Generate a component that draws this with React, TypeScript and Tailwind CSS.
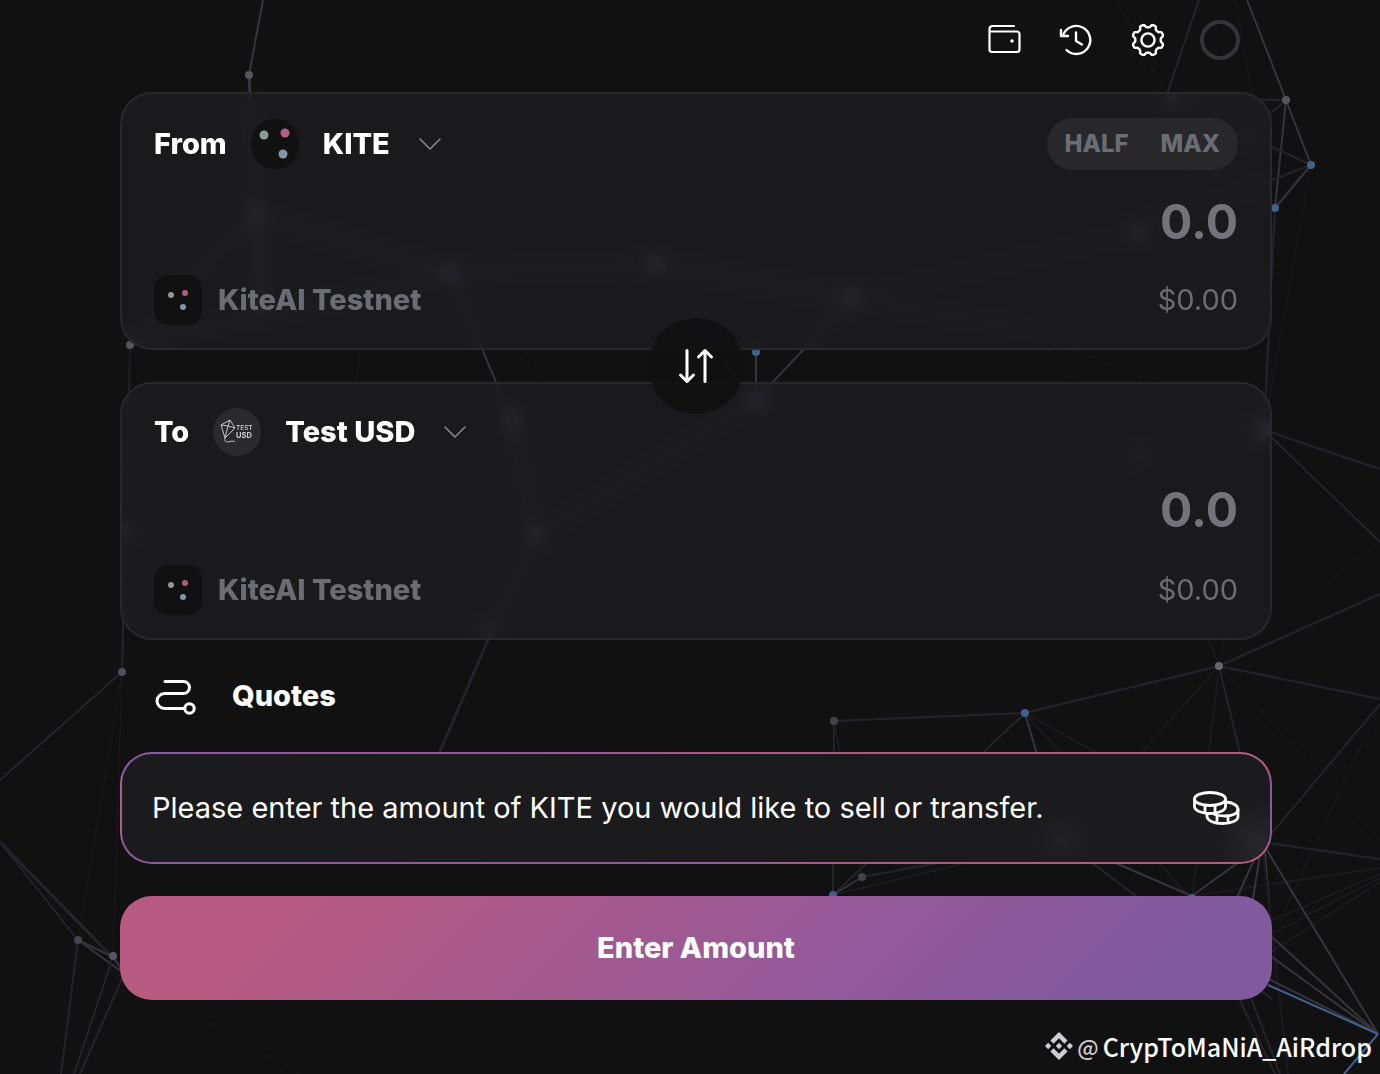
import type { ReactNode } from "react";
import { SiBinance } from "react-icons/si";

type Line = [number, number, number, number, string?, number?];

const faint = "#1b1a1e";
const dim = "#242329";
const mid = "#36343b";
const glow = "#3c394e";
const blue = "#42608e";

// Constellation lines: x1, y1, x2, y2, colour, width
const lines: Line[] = [
  [263, 0, 249, 75, mid, 2],
  [249, 75, 256, 214, mid, 3],
  [256, 214, 262, 315, mid, 5],
  [256, 214, 130, 345, dim, 4],
  [256, 214, 450, 273, mid, 3],
  [450, 273, 654, 264, mid, 2],
  [654, 264, 852, 298, mid, 3],
  [654, 264, 756, 404, dim, 2],
  [450, 273, 512, 420, mid, 2],
  [130, 345, 450, 273, dim, 4],
  [130, 345, 122, 672, dim, 2],
  [122, 528, 130, 345, faint],
  [340, 520, 360, 350, faint],
  [540, 380, 450, 273, faint],
  [852, 298, 756, 400, mid, 2],
  [852, 298, 1138, 232, dim, 2],
  [756, 352, 756, 400, mid, 2],
  [512, 420, 536, 536, mid, 4],
  [536, 536, 756, 400, dim, 3],
  [536, 536, 488, 640, dim, 4],
  [488, 640, 432, 770, dim, 3],
  [1030, 330, 1264, 430, faint],
  [1030, 330, 852, 298, dim, 3],
  [1030, 330, 1138, 455, faint],
  [1199, 0, 1167, 94, dim, 2],
  [1247, 0, 1286, 100, mid, 2],
  [1235, 0, 1252, 94, faint],
  [1116, 0, 1167, 94, faint],
  [1167, 98, 1286, 100, dim, 2],
  [1138, 232, 1286, 100, dim, 2],
  [1286, 100, 1311, 165, mid, 2],
  [1286, 100, 1275, 208, mid, 2],
  [1311, 165, 1275, 208, mid, 2],
  [1311, 165, 1167, 98, dim, 2],
  [1311, 165, 1138, 232, dim, 2],
  [1311, 165, 1264, 430, faint],
  [1275, 208, 1264, 430, dim, 2],
  [1264, 430, 1380, 469, dim, 2],
  [1264, 430, 1380, 542, dim, 2],
  [1264, 430, 1219, 666, faint],
  [1138, 455, 1219, 666, dim],
  [1219, 666, 1380, 594, dim, 2],
  [1219, 666, 1380, 699, dim, 2],
  [1219, 666, 1025, 713, dim, 2],
  [1219, 666, 1062, 840, dim],
  [1219, 666, 1192, 900, faint, 2],
  [1219, 666, 1262, 845, dim, 2],
  [1219, 666, 1380, 840, faint],
  [1219, 666, 1380, 542, faint],
  [1025, 713, 834, 721, dim, 2],
  [1025, 713, 1062, 840, mid, 2],
  [1025, 713, 833, 895, dim, 2],
  [1025, 713, 1192, 900, faint, 2],
  [1025, 713, 1262, 845, faint, 2],
  [1062, 840, 862, 877, dim, 2],
  [1062, 840, 1192, 896, mid, 2],
  [1062, 840, 1273, 1000, dim, 2],
  [834, 721, 833, 895, dim, 2],
  [834, 721, 862, 877, dim],
  [834, 721, 1062, 840, faint],
  [862, 877, 833, 895, mid, 2],
  [833, 895, 1062, 840, dim],
  [1192, 896, 1262, 845, mid, 2],
  [1192, 896, 1380, 868, faint, 2],
  [1380, 704, 1262, 845, dim, 2],
  [1380, 704, 1276, 930, faint],
  [1262, 842, 1380, 859, dim, 2],
  [1262, 842, 1378, 1034, mid, 2],
  [1262, 842, 1200, 980, mid, 2],
  [1262, 842, 1240, 980, mid, 2],
  [1264, 842, 1272, 937, mid, 2],
  [1262, 842, 1288, 1074, faint, 2],
  [1380, 874, 1240, 934, dim],
  [1380, 878, 1240, 950, dim],
  [1380, 882, 1240, 972, dim],
  [1272, 937, 1378, 1034, mid, 2],
  [1272, 957, 1378, 1034, mid, 2],
  [1265, 977, 1378, 1034, mid, 2],
  [1268, 985, 1378, 1034, blue, 2],
  [1378, 1034, 1344, 1074, blue, 2],
  [1235, 990, 1275, 1074, dim, 2],
  [1248, 990, 1280, 1074, dim, 2],
  [122, 672, 0, 780, dim, 2],
  [122, 672, 78, 940, faint],
  [122, 672, 113, 957, faint],
  [0, 842, 78, 940, dim, 2],
  [0, 842, 122, 967, dim, 3],
  [78, 940, 113, 957, mid, 2],
  [78, 940, 122, 972, mid, 2],
  [78, 940, 61, 1074, dim, 2],
  [113, 957, 74, 1074, dim, 2],
  [125, 972, 80, 1074, dim, 2],
  [113, 957, 125, 975, mid, 2],
  [170, 1000, 300, 1074, faint],
];

// Nodes: x, y, colour, radius
const nodes: [number, number, string, number?][] = [
  [249, 75, "#57555c"],
  [256, 214, glow, 9],
  [262, 310, dim, 9],
  [450, 273, glow, 9],
  [654, 264, glow, 9],
  [852, 298, glow, 9],
  [130, 345, "#57555c"],
  [128, 532, "#302e38", 7],
  [122, 672, "#4d4e5c"],
  [512, 420, glow, 9],
  [536, 536, glow, 8],
  [488, 630, "#302e38", 7],
  [756, 352, blue],
  [756, 402, glow, 9],
  [1170, 102, "#36343b", 7],
  [1138, 232, glow, 8],
  [1138, 455, "#2a2830", 7],
  [1262, 430, glow, 9],
  [1286, 100, "#59555f"],
  [1311, 165, blue],
  [1275, 208, blue],
  [1219, 666, "#67646b"],
  [1025, 713, blue],
  [834, 721, "#44424a"],
  [862, 877, "#44424a"],
  [833, 895, blue],
  [1192, 898, blue],
  [78, 940, "#44444f"],
  [113, 956, "#57555f"],
];

function Constellation() {
  return (
    <svg
      aria-hidden="true"
      className="absolute inset-0 h-full w-full"
      viewBox="0 0 1380 1074"
      preserveAspectRatio="xMidYMin slice"
    >
      {lines.map(([x1, y1, x2, y2, color = dim, width = 1], i) => (
        <line key={i} x1={x1} y1={y1} x2={x2} y2={y2} stroke={color} strokeWidth={width} />
      ))}
      {nodes.map(([cx, cy, color, r = 4], i) => (
        <circle key={i} cx={cx} cy={cy} r={r} fill={color} />
      ))}
    </svg>
  );
}

function WalletIcon() {
  return (
    <svg width="34" height="34" viewBox="0 0 34 34" fill="none" stroke="white" strokeWidth="2.2" strokeLinecap="round" strokeLinejoin="round">
      <path d="M27 3H5.500a3 3 0 0 0-3 3V26.500a2.500 2.500 0 0 0 2.500 2.500h25a2.500 2.500 0 0 0 2.500-2.500V11a2.500 2.500 0 0 0-2.500-2.500H3" />
      <circle cx="25" cy="18" r="1" fill="white" strokeWidth="1.5" />
    </svg>
  );
}

function HistoryIcon() {
  return (
    <svg width="34" height="34" viewBox="0 0 34 34" fill="none" stroke="white" strokeWidth="2.4" strokeLinecap="round" strokeLinejoin="round">
      <path d="M4 12.500A14 14 0 1 1 7.500 27" />
      <path d="M2 7v6h7" />
      <path d="M17 9.500V18l6 3.500" />
    </svg>
  );
}

function GearIcon() {
  // Eight rounded teeth around the hub
  const points = Array.from({ length: 128 }, (_, i) => {
    const a = (i / 128) * Math.PI * 2;
    const wave = Math.tanh(2.5 * Math.cos(8 * (a - Math.PI / 8)));
    const r = 14.2 + 1.5 * wave;
    return `${(17 + r * Math.cos(a)).toFixed(2)},${(17 + r * Math.sin(a)).toFixed(2)}`;
  }).join(" ");
  return (
    <svg width="34" height="34" viewBox="0 0 34 34" fill="none" stroke="white" strokeWidth="2.4" strokeLinejoin="round">
      <polygon points={points} />
      <circle cx="17" cy="17" r="6.6" />
    </svg>
  );
}

function Chevron() {
  return (
    <svg width="24" height="14" viewBox="0 0 24 14" fill="none" stroke="#8a8a90" strokeWidth="1.5" strokeLinecap="round" strokeLinejoin="round">
      <path d="M2 2l10 10L22 2" />
    </svg>
  );
}

function RouteIcon() {
  return (
    <svg width="42" height="40" viewBox="0 -3 42 40" fill="none" stroke="white" strokeWidth="3" strokeLinecap="round">
      <path d="M11 2.500H29.500a6 6 0 0 1 0 12H10.500a7.500 7.500 0 0 0 0 15H30" />
      <circle cx="35.500" cy="29.500" r="4.700" />
    </svg>
  );
}

function CoinsIcon() {
  return (
    <svg width="48" height="36" viewBox="0 0 48 36" fill="none" stroke="white" strokeWidth="2.800" strokeLinecap="round">
      <ellipse cx="18" cy="9" rx="15.500" ry="6.500" />
      <path d="M2.500 9v7.500c0 4 7 7 15.500 7s15.500-3 15.500-7V9M13 16v7M23 16v7" />
      <path d="M34 12c7 .5 12 3.500 12 7.500 0 4-6 6.500-13 6.500-5 0-10-1-12-2.500" />
      <path d="M46 19.500v7c0 4-6.500 7-15.500 7S15 30.500 15 26v-2M25 26v6.500M36 26v6.500" />
    </svg>
  );
}

function TokenLogo() {
  return (
    <svg width="48" height="50" viewBox="0 0 48 50" className="rounded-full bg-[#111112]">
      <circle cx="13" cy="16" r="4.500" fill="#8b9a9a" />
      <circle cx="34" cy="14" r="4.500" fill="#b95a85" />
      <circle cx="32" cy="35" r="4.500" fill="#8395a5" />
    </svg>
  );
}

function ChainLogo() {
  return (
    <svg width="48" height="50" viewBox="0 0 48 50" className="rounded-[14px] bg-[#111112]">
      <circle cx="17" cy="20" r="3" fill="#8b9a9a" />
      <circle cx="31" cy="18" r="3" fill="#b95a85" />
      <circle cx="29" cy="32" r="3" fill="#8395a5" />
    </svg>
  );
}

function TestUsdLogo() {
  return (
    <svg width="48" height="48" viewBox="0 0 48 48" className="rounded-full bg-[#2a2a2d]">
      <path
        d="M8 17l9-5 5 8-10 10-4-13 7 1 7 2M17 12l-2 6-3 12c-1 5 3 4 5 3.500s3-.5 5 0"
        fill="none"
        stroke="#c4c4c7"
        strokeWidth="1"
        strokeLinejoin="round"
      />
      <g fill="#cfcfd2" fontFamily="Inter, sans-serif" fontSize="6.5">
        <text x="23" y="22" fontWeight="500">TEST</text>
        <text x="23" y="30" fontSize="7.5" fontWeight="700">USD</text>
      </g>
    </svg>
  );
}

function SwapIcon() {
  return (
    <svg width="36" height="36" viewBox="0 0 36 36" fill="none" stroke="white" strokeWidth="3" strokeLinecap="round" strokeLinejoin="round">
      <path d="M9 2.500v31M2.500 27L9 33.500l6.500-6.500M27 33.500v-31M20.500 9L27 2.500 33.500 9" />
    </svg>
  );
}

type PanelProps = {
  label: string;
  token: string;
  logo: ReactNode;
  actions?: ReactNode;
};

function TokenPanel({ label, token, logo, actions }: PanelProps) {
  const id = `${label.toLowerCase()}-amount`;
  return (
    <section className="flex min-h-[258px] flex-col justify-between rounded-[32px] border-2 border-[#28282b] bg-[#222225]/60 px-8 pt-6 pb-[22px] backdrop-blur-[8px]">
      <div className="flex items-center justify-between">
        <div className="flex items-center gap-6 text-[29px] leading-9 font-extrabold text-white">
          <label htmlFor={id}>{label}</label>
          <button type="button" className="flex items-center gap-6">
            {logo}
            {token}
            <span className="pl-1">
              <Chevron />
            </span>
          </button>
        </div>
        {actions}
      </div>
      <input
        id={id}
        type="text"
        inputMode="decimal"
        placeholder="0.0"
        className="block h-16 w-full bg-transparent text-right text-[48px] font-bold text-[#737379] outline-none placeholder:text-[#737379]"
      />
      <div className="flex h-[52px] items-center justify-between text-[#6c6c73]">
        <div className="flex items-center gap-4 text-[29px] leading-9 font-extrabold">
          <ChainLogo />
          KiteAI Testnet
        </div>
        <span className="text-[29px] leading-9">$0.00</span>
      </div>
    </section>
  );
}

export default function App() {
  return (
    <div className="relative min-h-screen overflow-hidden bg-[#111112] font-['Inter',sans-serif] text-white">
      <Constellation />
      <div className="relative pr-[108px] pl-[120px]">
        <header className="flex h-20 items-center justify-end gap-8 pr-8">
          <button type="button" aria-label="Wallet" className="flex w-10 justify-center"><WalletIcon /></button>
          <button type="button" aria-label="History" className="flex w-10 justify-center"><HistoryIcon /></button>
          <button type="button" aria-label="Settings" className="flex w-10 justify-center"><GearIcon /></button>
          <button type="button" aria-label="Account" className="h-10 w-10 rounded-full border-4 border-[#34323a]" />
        </header>

        <main className="flex flex-col pt-3">
          <TokenPanel
            label="From"
            token="KITE"
            logo={<TokenLogo />}
            actions={
              <div className="flex h-[52px] items-center gap-8 rounded-full bg-[#28282b] px-[18px] text-2xl font-extrabold text-[#6c6c73]">
                <button type="button">HALF</button>
                <button type="button">MAX</button>
              </div>
            }
          />

          {/* Swap direction, straddling both panels */}
          <div className="relative z-10 flex h-8 items-center justify-center">
            <button
              type="button"
              aria-label="Swap tokens"
              className="absolute flex h-24 w-24 items-center justify-center rounded-full bg-[#111112]/90"
            >
              <SwapIcon />
            </button>
          </div>

          <TokenPanel label="To" token="Test USD" logo={<TestUsdLogo />} />

          <div className="flex h-28 items-center gap-9 px-[34px]">
            <RouteIcon />
            <h2 className="text-[29px] leading-9 font-extrabold">Quotes</h2>
          </div>

          <div className="flex min-h-28 items-center justify-between rounded-[32px] border-2 border-transparent bg-[radial-gradient(circle_at_1136px_88px,#28272a,transparent_40px),radial-gradient(circle_at_940px_86px,#212026,transparent_30px),linear-gradient(#1b1b1d,#1b1b1d),linear-gradient(135deg,#865a9e,#96599b_40%,#b85a84_70%)] px-[30px] [background-clip:padding-box,padding-box,padding-box,border-box]">
            <p className="text-[29px] leading-9">
              Please enter the amount of KITE you would like to sell or transfer.
            </p>
            <CoinsIcon />
          </div>

          <button
            type="button"
            className="mt-8 h-[104px] rounded-[32px] bg-[linear-gradient(135deg,#b65a80_15%,#92599b_65%,#7f5a9e_90%)] text-[29px] font-extrabold"
          >
            Enter Amount
          </button>
        </main>
      </div>

      <footer className="relative mt-[26px] flex h-10 items-center justify-end gap-1 pr-2 font-['Noto_Sans_CJK_SC',sans-serif] text-[25px] leading-10 font-medium">
        <SiBinance className="h-7 w-7 text-[#cfcdd1]" />
        <span className="text-[22px] text-[#cfcdd1]">@</span>
        <span>CrypToMaNiA_AiRdrop</span>
      </footer>
    </div>
  );
}
